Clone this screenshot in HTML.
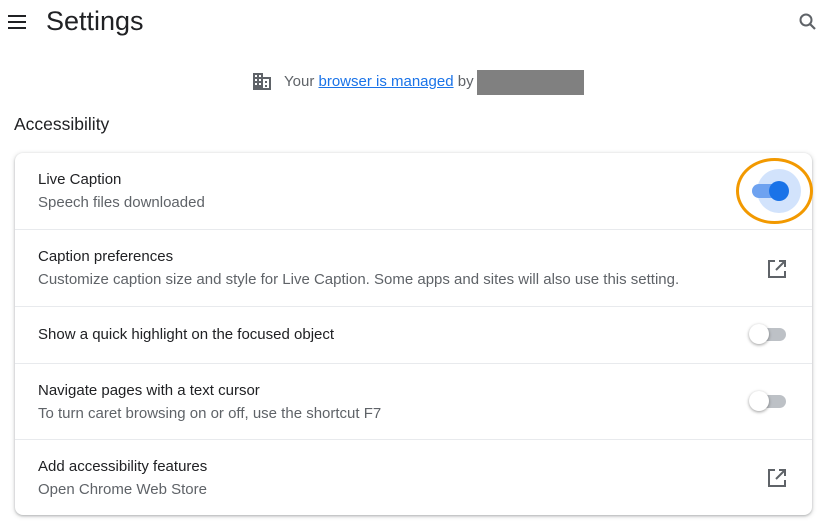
<!DOCTYPE html>
<html><head><meta charset="utf-8"><style>
*{margin:0;padding:0;box-sizing:border-box}
body{width:827px;height:532px;background:#fff;font-family:"Liberation Sans",Arial,sans-serif;position:relative;overflow:hidden;color:#202124}
.abs{position:absolute}
.card{position:absolute;left:15px;top:153px;width:797px;height:362px;border-radius:8px;background:#fff;box-shadow:0 1px 2px rgba(60,64,67,.3),0 1px 4px 1px rgba(60,64,67,.15)}
.row{position:absolute;left:0;width:797px;border-top:1px solid #e8eaed}
.row:first-child{border-top:none}
.t{position:absolute;left:23px;font-size:15px;color:#202124;white-space:nowrap}
.s{position:absolute;left:23px;font-size:15px;color:#5f6368;white-space:nowrap}
.off .tr{position:absolute;width:36px;height:13px;border-radius:7px;background:#bdc1c6}
.off .kn{position:absolute;width:20px;height:20px;border-radius:50%;background:#fff;box-shadow:0 1px 3px rgba(0,0,0,.4)}
</style></head><body>
<svg class="abs" style="left:7px;top:14px" width="20" height="16" viewBox="0 0 20 16"><rect x="1" y="1" width="18" height="2" fill="#202124"/><rect x="1" y="7" width="18" height="2" fill="#202124"/><rect x="1" y="13" width="18" height="2" fill="#202124"/></svg>
<div class="abs" style="left:46px;top:6px;font-size:27px;color:#202124">Settings</div>
<svg class="abs" style="left:798px;top:12px" width="20" height="20" viewBox="0 0 20 20"><circle cx="8" cy="8" r="5.5" fill="none" stroke="#5f6368" stroke-width="2"/><path d="M12 12l5 5" stroke="#5f6368" stroke-width="2.2"/></svg>
<svg class="abs" style="left:252px;top:71px" width="20" height="20" viewBox="0 0 20 20"><path d="M1 2h10v4h8v13H1z" fill="#5f6368"/><g fill="#fff"><rect x="3" y="4" width="2" height="2"/><rect x="7" y="4" width="2" height="2"/><rect x="3" y="8" width="2" height="2"/><rect x="7" y="8" width="2" height="2"/><rect x="3" y="12" width="2" height="2"/><rect x="7" y="12" width="2" height="2"/><rect x="11" y="8" width="6" height="9"/></g><g fill="#5f6368"><rect x="13" y="10" width="2" height="2"/><rect x="13" y="14" width="2" height="2"/></g></svg>
<div class="abs" style="left:284px;top:73px;font-size:15px;color:#5f6368;white-space:nowrap">Your <span style="color:#1a73e8;text-decoration:underline">browser is managed</span> by</div>
<div class="abs" style="left:477px;top:70px;width:107px;height:25px;background:#808080"></div>
<div class="abs" style="left:14px;top:114px;font-size:17.5px;color:#202124">Accessibility</div>
<div class="card">
 <div class="row" style="top:0;height:76px">
  <div class="t" style="top:18px">Live Caption</div><div class="s" style="top:41px">Speech files downloaded</div>
 </div>
 <div class="row" style="top:76px;height:77px">
  <div class="t" style="top:18px">Caption preferences</div><div class="s" style="top:41px">Customize caption size and style for Live Caption. Some apps and sites will also use this setting.</div>
 </div>
 <div class="row" style="top:153px;height:57px">
  <div class="t" style="top:19px">Show a quick highlight on the focused object</div>
 </div>
 <div class="row" style="top:210px;height:76px">
  <div class="t" style="top:18px">Navigate pages with a text cursor</div><div class="s" style="top:41px">To turn caret browsing on or off, use the shortcut F7</div>
 </div>
 <div class="row" style="top:286px;height:76px">
  <div class="t" style="top:18px">Add accessibility features</div><div class="s" style="top:41px">Open Chrome Web Store</div>
 </div>
</div>
<div class="abs" style="left:757px;top:169px;width:44px;height:44px;border-radius:50%;background:#d2e3fc"></div>
<div class="abs" style="left:752px;top:184px;width:36px;height:14px;border-radius:7px;background:#6ea2f0"></div>
<div class="abs" style="left:769px;top:181px;width:20px;height:20px;border-radius:50%;background:#1a73e8"></div>
<div class="abs" style="left:736px;top:158px;width:77px;height:66px;border-radius:50%;border:3px solid #f29900"></div>
<div class="off"><div class="tr" style="left:750px;top:328px"></div><div class="kn" style="left:749px;top:324px"></div></div>
<div class="off"><div class="tr" style="left:750px;top:395px"></div><div class="kn" style="left:749px;top:391px"></div></div>
<svg class="abs" style="left:766px;top:258px" width="22" height="22" viewBox="0 0 22 22"><path d="M9 3H3v16h16v-6" fill="none" stroke="#5f6368" stroke-width="2"/><path d="M13 3h6v6M19 3l-9 9" fill="none" stroke="#5f6368" stroke-width="2"/></svg>
<svg class="abs" style="left:766px;top:467px" width="22" height="22" viewBox="0 0 22 22"><path d="M9 3H3v16h16v-6" fill="none" stroke="#5f6368" stroke-width="2"/><path d="M13 3h6v6M19 3l-9 9" fill="none" stroke="#5f6368" stroke-width="2"/></svg>
</body></html>
